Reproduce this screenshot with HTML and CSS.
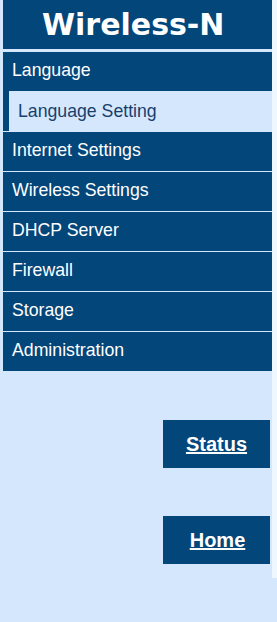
FILE: index.html
```html
<!DOCTYPE html>
<html>
<head>
<meta charset="utf-8">
<link rel="stylesheet" href="styles.css">
</head>
<body>
<div class="page">
  <div class="menu">
    <div class="logo">Wireless-N</div>
    <div class="group">
      <div class="item head">Language</div>
      <div class="item sub">Language Setting</div>
    </div>
    <div class="item">Internet Settings</div>
    <div class="item">Wireless Settings</div>
    <div class="item">DHCP Server</div>
    <div class="item">Firewall</div>
    <div class="item">Storage</div>
    <div class="item">Administration</div>
    <div class="buttons">
      <a class="btn" href="#">Status</a>
      <a class="btn home" href="#">Home</a>
    </div>
  </div>
  <div class="strip"></div>
</div>
</body>
</html>
```
FILE: styles.css
```css
html, body {
  margin: 0;
  padding: 0;
}
body {
  background: #d5e7fc;
  font-family: "Liberation Sans", Arial, sans-serif;
  width: 277px;
  height: 622px;
  overflow: hidden;
}
.page {
  display: grid;
  grid-template-columns: 272px 5px;
  align-items: start;
}
.strip {
  height: 578px;
  background: #eef6ff;
}
.menu {
  display: flex;
  flex-direction: column;
  padding-left: 3px;
}
.logo {
  height: 49px;
  line-height: 49px;
  background: #03467a;
  color: #ffffff;
  font-family: "DejaVu Sans", Verdana, sans-serif;
  font-weight: bold;
  font-size: 30px;
  padding-left: 39px;
  margin-bottom: 3px;
  white-space: nowrap;
}
.group {
  display: flex;
  flex-direction: column;
  margin-bottom: 1px;
}
.item {
  height: 39px;
  line-height: 37px;
  background: #03467a;
  color: #ffffff;
  font-size: 17.7px;
  padding-left: 9px;
  margin-bottom: 1px;
  white-space: nowrap;
}
.group .head {
  margin-bottom: 0;
}
.group .sub {
  height: 40px;
  line-height: 40px;
  margin-bottom: 0;
  background: #d5e7fc;
  color: #173f6e;
  border-left: 6px solid #03467a;
  padding-left: 9px;
}
.buttons {
  display: flex;
  flex-direction: column;
  align-items: flex-end;
  gap: 48px;
  padding-top: 48px;
  padding-right: 2px;
}
.btn {
  display: block;
  width: 107px;
  height: 48px;
  line-height: 48px;
  background: #03467a;
  color: #ffffff;
  font-weight: bold;
  font-size: 20px;
  text-align: center;
  text-decoration: underline;
}
.btn.home {
  padding-left: 2px;
  width: 105px;
}
```
